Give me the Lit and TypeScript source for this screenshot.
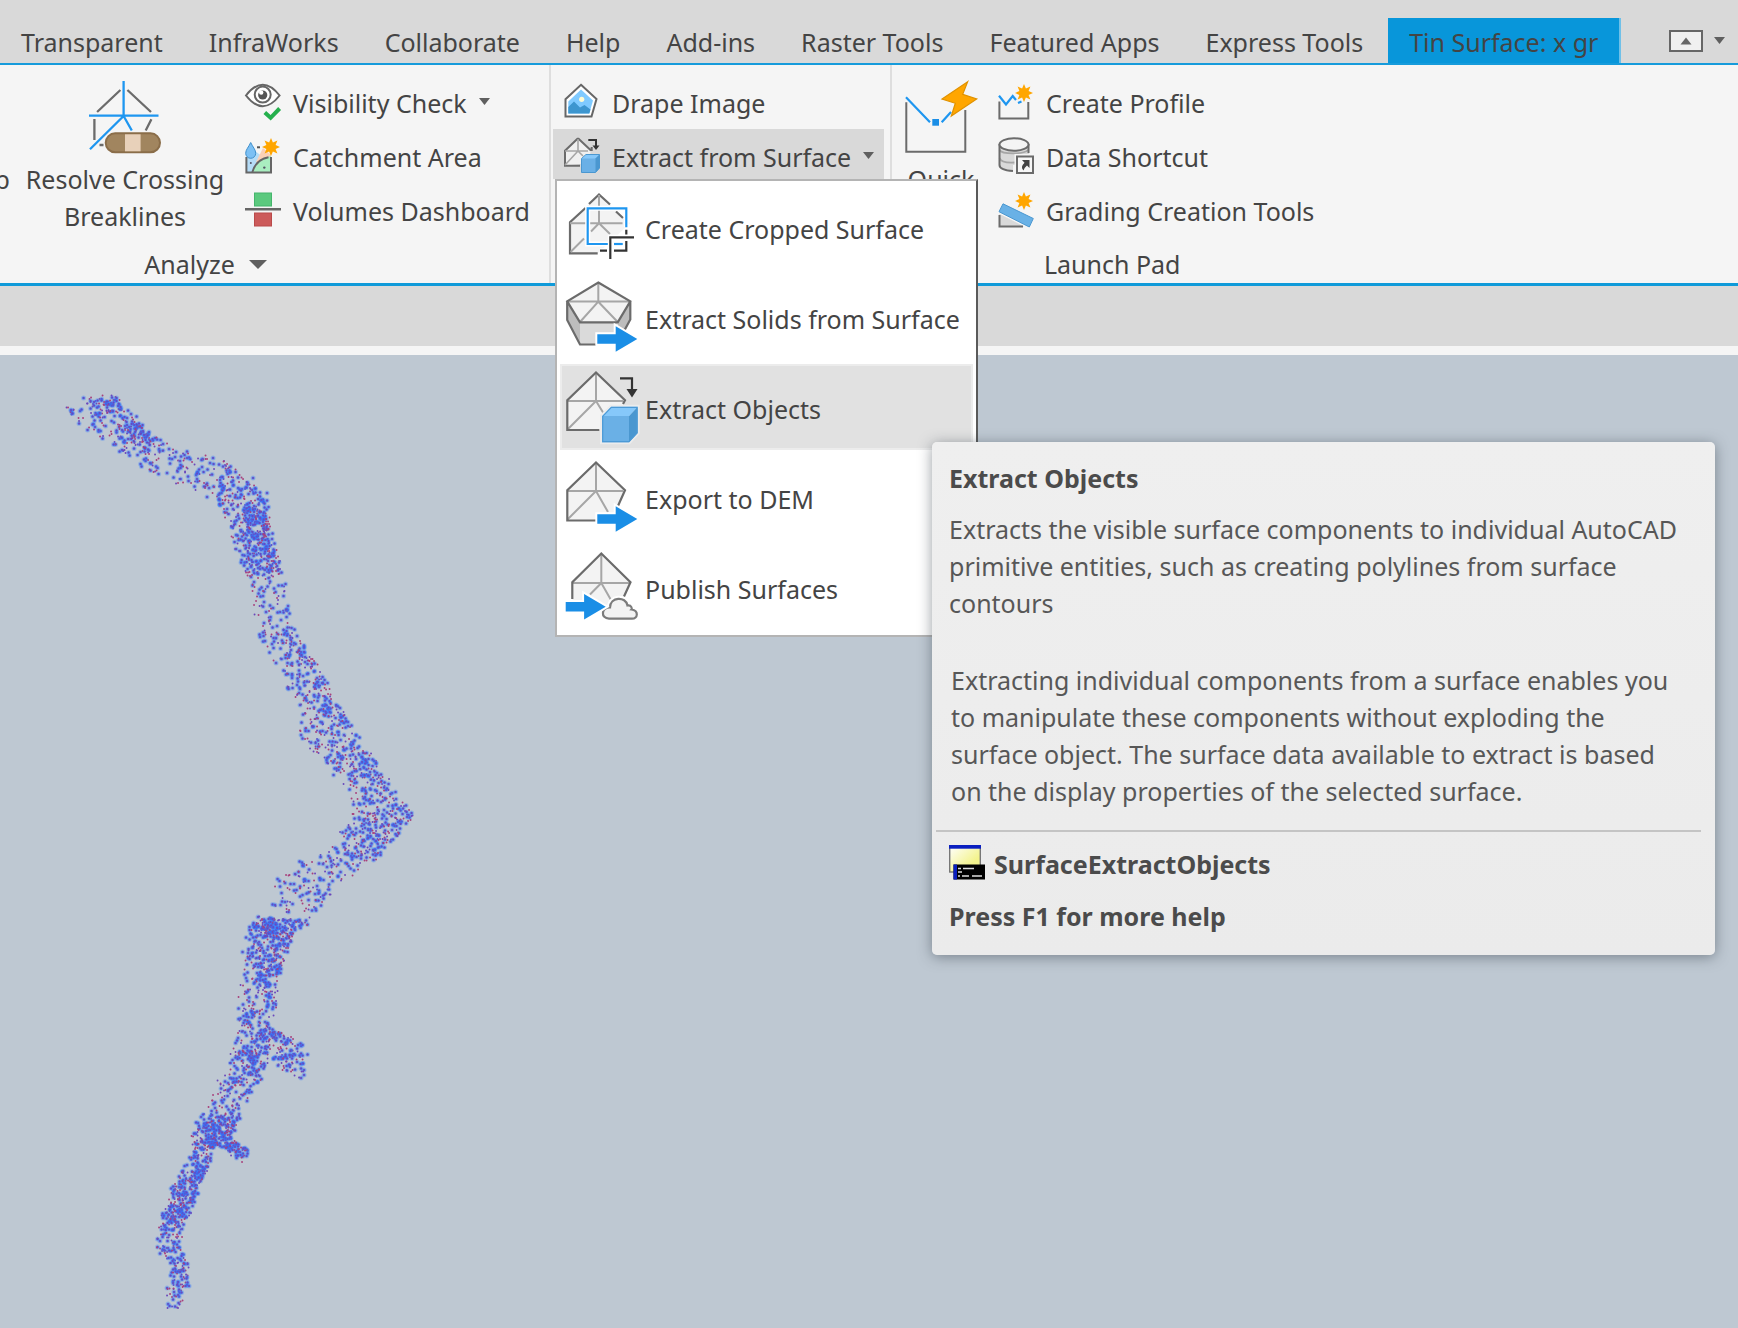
import { LitElement, html, svg, css, nothing, type TemplateResult } from "lit";
import { customElement, property } from "lit/decorators.js";

type Pt = [number, number];

/* ---------- shared icon parts ---------- */

const star = (cx: number, cy: number) => {
  const pts: string[] = [];
  for (let i = 0; i < 16; i++) {
    const r = i % 2 ? 5 : 9;
    const a = (Math.PI * i) / 8;
    pts.push(`${(cx + r * Math.sin(a)).toFixed(1)},${(cy - r * Math.cos(a)).toFixed(1)}`);
  }
  return svg`<polygon points=${pts.join(" ")} fill="#ffa600"/>`;
};

const arrow = (x: number, y: number) => svg`
  <path transform="translate(${x} ${y})" d="M0 8H18.4V0L40 12.7 18.4 25.4V17.4H0Z"
    fill="#1a8ee6" stroke="#fff" stroke-width="4" paint-order="stroke"/>`;

const cube = svg`
  <path d="M36 45 45.3 35.7H71.7V62L63 71.3H36Z" fill="#fff" stroke="#ececec" stroke-width="4"/>
  <path d="M36 45H63V71.3H36Z" fill="#6ab0e6"/>
  <path d="M36 45 45.3 35.7H71.7L63 45Z" fill="#86c8fa"/>
  <path d="M63 45 71.7 35.7V62L63 71.3Z" fill="#4a97d0"/>
  <path d="M36.7 45.3 45.3 36.4H71V62L63 70.6H36.7Z" fill="none" stroke="#4c9ad6" stroke-width="1.2"/>`;

const icons: Record<string, TemplateResult> = {
  resolve: svg`<g fill="none" stroke-width="2.3">
    <path stroke="#6b6b6b" d="M31.4 9 8.1 31M38.400 9 62 31M5.400 38V59M62.400 38.300 56.700 49.500M10.500 64H14.500"/>
    <path stroke="#1e96f0" d="M34.600 0V35M0 34.700H69.500M34.600 35 1 68.300M34.600 35 42.800 49.500"/></g>
    <rect x="16.700" y="52.300" width="54.300" height="19" rx="9.500" fill="#a1855f" stroke="#8a6d49" stroke-width="2"/>
    <rect x="36" y="53.300" width="15.600" height="17" fill="#e8d1ba"/>`,
  visibility: svg`<path d="M1 12.500Q17.700-9 34.600 12.500 17.700 34 1 12.500Z" fill="#fff" stroke="#666" stroke-width="2"/>
    <circle cx="17.700" cy="11.600" r="8" fill="#fff" stroke="#666" stroke-width="2"/>
    <circle cx="17.700" cy="12" r="4.600" fill="#555"/><circle cx="16.200" cy="9.600" r="2.200" fill="#fff"/>
    <path d="m19.800 29.600 5.800 5.200L34.600 25.500" fill="none" stroke="#25b04d" stroke-width="4"/>`,
  catchment: svg`<path d="M1.400 20V35.600H8L18 20 10 14Z" fill="#b5dcf7"/>
    <path d="M11 25 18 11 26 18 25 21 14 25Z" fill="#fbd0b6"/>
    <path d="M8 35.600Q12 21 26 19V35.600Z" fill="#a9eec0"/>
    <path d="M1.400 20V35.400H26V20" fill="none" stroke="#666" stroke-width="2"/>
    <path d="M7.400 35Q11 22.500 23.500 20.300" fill="none" stroke="#666" stroke-width="2"/>
    <path d="M12 10.300H15" stroke="#555" stroke-width="2"/>
    <circle cx="19.300" cy="30.600" r="1.200" fill="#556"/><circle cx="5.800" cy="26" r="1" fill="#556"/>
    <path d="M5.700 5.500C8 10.500 10.700 12.500 10.700 16.300A5 5 0 0 1 .7 16.300C.7 12.500 3.500 10.500 5.700 5.500Z" fill="#7cc0f4" stroke="#3f8fcc" stroke-width="1"/>
    ${star(26, 10)}`,
  volumes: svg`<rect x="9.500" y="2" width="17" height="13" fill="#5bc97e" stroke="#45b56c"/>
    <path d="M0 18.300H36" stroke="#666" stroke-width="2.400"/>
    <rect x="9.500" y="22" width="17" height="13" fill="#cc5a5a" stroke="#b94a4a"/>`,
  drape: svg`<path d="M17 1.800 32.500 16 27.500 33.500H1.500V16.300Z" fill="#fff" stroke="#666" stroke-width="2"/>
    <path d="M17 6.500 29 17.500 25.300 30.500H4.300V18.500Z" fill="#7fcaff"/>
    <path d="M4.300 24 10 18.500 16 24.500 20.500 22 26.500 26.500 25.300 30.500H4.300Z" fill="#3d96cf"/>
    <circle cx="17.700" cy="16.300" r="2.600" fill="#fdfbd5"/>`,
  extractSmall: svg`<path d="M14 1.300 27 13.500 24 26 1 28.700V13.800Z" fill="#f0f0f0"/>
    <path d="M14 1.300 27 13.500M14 1.300 1 13.800V28.700H16M27.700 10V14" fill="none" stroke="#6b6b6b" stroke-width="2"/>
    <path d="M1 14H24M14 2V14M14 14 1 28M14 14 19 19" fill="none" stroke="#a6a6a6" stroke-width="1.600"/>
    <path d="M24.300 3H32V9" fill="none" stroke="#333" stroke-width="2"/><path d="M28.500 8.500H35.500L32 13Z" fill="#333"/>
    <path d="M17.500 21.500 22 17.500H35.500V31L31.500 35.500H17.500Z" fill="#6ab0e6" stroke="#4a97d0"/>
    <path d="M18 21.500 22 18H35L31.500 21.500Z" fill="#86c8fa"/><path d="M31.500 21.500 35.500 17.500V31L31.500 35.500Z" fill="#4a97d0"/>`,
  quick: svg`<path d="M1.300 21.300V70.700H60.300V29" fill="none" stroke="#6b6b6b" stroke-width="2"/>
    <path d="M1 16.300 25 41.300M36.700 41.300 46 31" fill="none" stroke="#1e96f0" stroke-width="2.200"/>
    <rect x="27.300" y="38" width="6.700" height="6.700" fill="#1a8ee6"/>
    <path d="M62.700.700 37 18 50.300 22.300 46.300 35 71.700 18 57.700 13.300Z" fill="#ffa600" stroke="#e09200" stroke-width="1.200"/>`,
  profile: svg`<path d="M1.400 18.500V35.400H30.300V19" fill="none" stroke="#6b6b6b" stroke-width="2"/>
    <path d="M1 12.700 8 21.500 14.700 13 18 17M20 20 23.500 18.500" fill="none" stroke="#1e96f0" stroke-width="2.200"/>${star(26, 10)}`,
  shortcut: svg`<path d="M1.500 7V28C1.500 32 7 34 15 34V28H31V7Z" fill="#d9d9d9"/>
    <path d="M1.500 13C4 17.500 26 17.500 30 13M1.500 21C3 25 10 26 17 25.500" fill="none" stroke="#a6a6a6" stroke-width="1.800"/>
    <path d="M30.500 16V7M1.500 7V28C1.500 31.500 7 33.500 15 34" fill="none" stroke="#6b6b6b" stroke-width="2"/>
    <ellipse cx="16" cy="7.500" rx="14.500" ry="6.300" fill="#f4f4f4" stroke="#6b6b6b" stroke-width="2"/>
    <rect x="19" y="19.500" width="16" height="16.500" fill="#f7f7f7" stroke="#f5f5f5" stroke-width="5"/>
    <rect x="19" y="19.500" width="16" height="16.500" fill="#f7f7f7" stroke="#6b6b6b" stroke-width="2"/>
    <path d="M24 23H31.500V31L29 28.500Q26.500 30.500 25.500 33.500 22 30 26.500 25.700Z" fill="#444"/>`,
  grading: svg`<path d="M1.500 23V35.400H26Z" fill="#d9d9d9"/><path d="M1.500 24V35.400H25" fill="none" stroke="#6b6b6b" stroke-width="2"/>
    <path d="M5 12.800 35.300 27.500 31.300 36 1 20.700Z" fill="#69b1e6" stroke="#4a97d0"/>${star(26, 10)}`,
  cropped: svg`<path d="M33 3.500 64 32.300 31.700 62.300H4V31.300Z" fill="#f3f3f3"/>
    <path d="M23 13 33 3.500 44 13.500M19.500 17 4 31.300V62.300H31.700M50 20.500 57 27" fill="none" stroke="#6b6b6b" stroke-width="2.200"/>
    <path d="M33 4V32.300M4 32.300H56.500M33 32.300 25 40.500M18 47.500 4.500 61M33 32.300 44 43" fill="none" stroke="#a6a6a6" stroke-width="2"/>
    <path d="M60.300 36.300V17.300H21.700V53H46M48 53H56.500" fill="none" stroke="#fff" stroke-width="5"/>
    <path d="M60.300 36.300V17.300H21.700V53H42M48 53H56.500" fill="none" stroke="#1e96f0" stroke-width="2.200"/>
    <path d="M44.300 68V46.300H68M60.300 38.700V43M60.300 49.500V59.700H48M42 59.700H34" fill="none" stroke="#fff" stroke-width="5"/>
    <path d="M48 53H56.500" stroke="#1e96f0" stroke-width="2.200"/>
    <path d="M44.300 68V46.300H68M60.300 38.700V43.500M60.300 50V59.700H48M41 59.700H34" fill="none" stroke="#333" stroke-width="2.200"/>`,
  solids: svg`<path d="M1 20.300 14 41.300V63.500L1 39ZM64.500 20.300 51.700 41.300V63.500L64.500 39Z" fill="#bdbdbd"/>
    <path d="M14 41.300H51.700V63.500H14Z" fill="#dadada"/>
    <path d="M32.300 1.500 64.300 20.300 51.700 41.300H14L1.200 20.300Z" fill="#f3f3f3"/>
    <path d="M32.300 2V20.700M2 20.500H64M32.300 20.700 14 41M32.300 20.700 51.700 41" fill="none" stroke="#a6a6a6" stroke-width="2"/>
    <path d="M32.300 1.500 64.300 20.300 51.700 41.300H14L1.200 20.300ZM1.200 20.300V39L14 63.500H30M64.300 20.300V38.500L57 52" fill="none" stroke="#6b6b6b" stroke-width="2.200"/>
    ${arrow(31.300, 45.300)}`,
  objects: svg`<path d="M30 1.500 59 29.300 46 59H1.300V29.300Z" fill="#f3f3f3"/>
    <path d="M1.300 30H57M30 2V30M30 30 1.500 58.500M30 30 38 43" fill="none" stroke="#a6a6a6" stroke-width="2"/>
    <path d="M33.300 59H1.300V29.300L30 1.500 59 29.300 57 33" fill="none" stroke="#6b6b6b" stroke-width="2.200"/>
    <path d="M54 7.300H66V19" fill="none" stroke="#333" stroke-width="2.200"/><path d="M60.500 18H71.500L66 26.500Z" fill="#333"/>${cube}`,
  dem: svg`<path d="M30 1.500 59 29.300 46 59H1.300V29.300Z" fill="#f3f3f3"/>
    <path d="M1.300 30H57M30 2V30M30 30 1.500 58.500M30 30 42 51" fill="none" stroke="#a6a6a6" stroke-width="2"/>
    <path d="M30 59.500H1.300V29.300L30 1.500 59 29.300 51.500 46" fill="none" stroke="#6b6b6b" stroke-width="2.200"/>
    ${arrow(31.300, 45.300)}`,
  publish: svg`<path d="M35.300 2.500 64.500 31.300 54 54H6.300V31.300Z" fill="#f3f3f3"/>
    <path d="M6.300 32H63M35.300 3V32M35.300 32 24 43.500M35.300 32 45 49" fill="none" stroke="#a6a6a6" stroke-width="2"/>
    <path d="M6.300 48V31.300L35.300 2.500 64.500 31.300 58 45.500" fill="none" stroke="#6b6b6b" stroke-width="2.200"/>
    <path d="M43 67.700C34.500 67.500 35 56.500 44 56.500 44 45.500 60 45 61.500 54.500 66 54 66 58 65.500 58.500 73 59.500 72 67.700 66 67.700Z"
      fill="#f3f3f3" stroke="#fff" stroke-width="6" paint-order="stroke"/>
    <path d="M43 67.700C34.500 67.500 35 56.500 44 56.500 44 45.500 60 45 61.500 54.500 66 54 66 58 65.500 58.500 73 59.500 72 67.700 66 67.700Z"
      fill="#f3f3f3" stroke="#7c7c7c" stroke-width="2.200"/>
    ${arrow(-0.300, 43)}`,
  command: svg`<defs><linearGradient id="note" x1="0" y1="0" x2="1" y2="1"><stop offset="0" stop-color="#fff"/><stop offset=".7" stop-color="#f3f38c"/></linearGradient></defs>
    <rect x=".700" y="1" width="30.600" height="26" fill="url(#note)" stroke="#777" stroke-width="1.400"/>
    <rect y="0" width="32" height="3.700" fill="#0a1fc0"/>
    <rect x="4.500" y="19.500" width="31.500" height="15" fill="#000"/><rect x="4.500" y="19.500" width="3.500" height="15" fill="#0a1fc0"/>
    <path d="M9 23.500H12M14 23.500H25M9 27H13M9 31H11M13 31H20M23 31H33" stroke="#ddd" stroke-width="1.600"/>`,
};

@customElement("cad-icon")
class CadIcon extends LitElement {
  @property() name = "";
  @property({ type: Number }) size = 36;
  static styles = css`
    :host { display: block; flex: none; }
    svg { display: block; overflow: visible; }
  `;
  render() {
    return html`<svg width=${this.size} height=${this.size} viewBox="0 0 ${this.size} ${this.size}" aria-hidden="true">${icons[this.name]}</svg>`;
  }
}

/* ---------- survey point cloud ---------- */

/** One strip of the corridor: four corners and the area in px² that each point takes. */
type Strip = [Pt, Pt, Pt, Pt, number];

/** Cross-sections down the corridor: left edge, right edge, px² per point up to the next one. */
const sections: [Pt, Pt, number][] = [
  [[65, 417], [67, 408], 30], [[90, 434], [88, 394], 17], [[118, 449], [117, 398], 13],
  [[150, 474], [147, 430], 26], [[183, 487], [177, 450], 22], [[217, 503], [222, 458], 12],
  [[227, 523], [265, 490], 8], [[232, 543], [270, 530], 7], [[248, 578], [282, 573], 26],
  [[250, 603], [287, 593], 28], [[254, 632], [292, 625], 14], [[283, 675], [320, 670], 13],
  [[295, 703], [337, 703], 14], [[303, 740], [360, 740], 11], [[323, 760], [378, 765], 13],
  [[350, 792], [396, 790], 13], [[353, 813], [413, 818], 12], [[330, 847], [388, 847], 12],
  [[313, 860], [383, 855], 20], [[285, 863], [347, 880], 24], [[270, 885], [318, 908], 30], [[270, 912], [314, 912], 30],
];

const lowerSections: [Pt, Pt, number][] = [
  [[253, 917], [312, 918], 7], [[247, 937], [290, 940], 8], [[240, 978], [280, 973], 12],
  [[238, 1025], [273, 1025], 11], [[230, 1053], [268, 1063], 12], [[210, 1098], [257, 1087], 17],
  [[200, 1116], [240, 1116], 5], [[192, 1131], [237, 1129], 6], [[194, 1148], [213, 1148], 7],
  [[180, 1170], [207, 1170], 6], [[170, 1190], [198, 1190], 5], [[165, 1210], [191, 1210], 6],
  [[155, 1227], [184, 1227], 10], [[158, 1250], [180, 1250], 9], [[169, 1267], [188, 1265], 8],
  [[170, 1280], [190, 1280], 10], [[164, 1297], [185, 1290], 13], [[165, 1310], [180, 1307], 14],
];

const spurs: Strip[] = [
  [[101, 395], [117, 396], [126, 412], [105, 414], 10],
  [[120, 416], [142, 426], [168, 447], [122, 445], 13],
  [[250, 510], [266, 500], [268, 540], [252, 540], 14],
  [[262, 1030], [285, 1032], [312, 1052], [263, 1063], 12],
  [[273, 1058], [312, 1050], [302, 1081], [278, 1066], 12],
  [[248, 1048], [256, 1048], [254, 1072], [246, 1072], 8],
  [[253, 917], [276, 917], [276, 937], [250, 937], 9],
  [[205, 1131], [230, 1131], [240, 1150], [215, 1146], 6],
  [[225, 1138], [250, 1148], [242, 1163], [225, 1154], 7],
];

const strips = (rows: [Pt, Pt, number][]): Strip[] =>
  rows.slice(1).map(([l, r], i) => [rows[i][0], rows[i][1], r, l, rows[i][2]] as Strip);

function scatter(): Pt[] {
  let seed = 20117;
  const rnd = () => ((seed = (seed * 1664525 + 1013904223) >>> 0) / 4294967296);
  const out: Pt[] = [];
  for (const [a, b, c, d, per] of [...strips(sections), ...strips(lowerSections), ...spurs]) {
    const q = [a, b, c, d];
    const area = Math.abs(q.reduce((s, p, i) => s + p[0] * q[(i + 1) % 4][1] - q[(i + 1) % 4][0] * p[1], 0)) / 2;
    for (let n = Math.round(area / per); n > 0; n--) {
      const u = Math.pow(rnd(), 0.8);
      const v = rnd();
      out.push([0, 1].map((k) =>
        Math.round(((a[k] * (1 - u) + b[k] * u) * (1 - v) + (d[k] * (1 - u) + c[k] * u) * v + (rnd() - 0.5) * 4) * 2) / 2) as Pt);
    }
  }
  return out;
}

@customElement("point-cloud")
class PointCloud extends LitElement {
  static styles = css`
    :host { display: block; }
    svg { display: block; overflow: visible; }
    path { fill: none; stroke-linecap: round; }
    .halo { stroke: #2f7bff; stroke-width: 5; opacity: 0.28; }
    .core { stroke: #3f6cf2; stroke-width: 3; opacity: 0.7; }
    .dot { stroke: #6a48bc; stroke-width: 1.8; }
    .mark { stroke: #a8407c; stroke-width: 1.8; }
  `;
  render() {
    const pts = scatter();
    const d = (x: number, y: number) => `M${x} ${y - 355}h.1`;
    return html`<svg width="440" height="970" viewBox="0 0 440 970" role="img" aria-label="Surface points">
      ${pts.map(([x, y], i) => (i * 7) % 10 < 5
        ? svg`<path class="halo" d=${d(x, y)}/><path class="core" d=${d(x, y)}/><path class="dot" d=${d(x, y)}/>`
        : svg`<path class=${i % 2 ? "mark" : "dot"} d=${d(x, y)}/>`)}
    </svg>`;
  }
}

/* ---------- page ---------- */

const tabs = ["Transparent", "InfraWorks", "Collaborate", "Help", "Add-ins", "Raster Tools", "Featured Apps", "Express Tools", "Tin Surface: x gr"];
const menu: [string, string][] = [
  ["cropped", "Create Cropped Surface"], ["solids", "Extract Solids from Surface"], ["objects", "Extract Objects"],
  ["dem", "Export to DEM"], ["publish", "Publish Surfaces"],
];

@customElement("app-root")
class AppRoot extends LitElement {
  static styles = css`
    :host {
      display: flex; flex-direction: column; min-height: 100vh; position: relative; overflow: hidden;
      background: #bec8d2; color: #444; font: 25px/36px "Noto Sans", "Open Sans", sans-serif;
    }
    * { box-sizing: border-box; }
    button { border: 0; padding: 0; margin: 0; background: none; color: inherit; font: inherit; white-space: nowrap; text-align: left; }
    .tabbar { display: flex; align-items: flex-end; padding-top: 18px; background: #d9d9d9; border-bottom: 2px solid #169bdb; }
    .tabs { display: flex; gap: 4px; }
    .tab { height: 45px; padding: 2px 21px 0; }
    .tab.active { background: #0896da; border-right: 2px solid #6fc0e8; }
    .collapse { display: flex; align-items: center; gap: 11px; margin-left: 48px; height: 45px; }
    .ribbon { display: flex; background: #f5f5f5; border-bottom: 3px solid #0f9ad9; }
    .panel { display: flex; flex-direction: column; flex: none; padding-top: 10px; border-right: 2px solid #dedede; }
    .panel.launch { border-right: 0; }
    .groups { display: flex; min-height: 160px; }
    .cut { display: flex; justify-content: flex-end; align-items: flex-start; width: 10px; padding-top: 86px; line-height: 37px; overflow: hidden; }
    .big { display: flex; flex-direction: column; align-items: center; gap: 8px; padding-top: 6px; text-align: center; white-space: pre-line; line-height: 37px; }
    .resolve { width: 230px; }
    .quick { width: 98px; }
    .list { display: flex; flex-direction: column; gap: 4px; padding-left: 5px; }
    .row { display: flex; align-items: center; gap: 12px; height: 50px; padding-top: 2px; }
    .label { padding-top: 3px; }
    .caption { display: flex; align-items: center; justify-content: center; gap: 14px; height: 48px; padding-top: 10px; }
    .analyze { width: 551px; }
    .analyze .caption { padding-right: 138px; }
    .surface { width: 341px; }
    .surface .list { padding-left: 2px; }
    .surface .row { width: 331px; padding-left: 11px; }
    .launch { padding-right: 18px; }
    .launch .list { padding-left: 8px; }
    .launch .caption { padding-left: 18px; }
    .drop { position: relative; }
    .drop > .row { background: #d9d9d9; }
    .menu {
      position: absolute; z-index: 2; top: 50px; left: 2px; display: flex; flex-direction: column; gap: 4px; padding: 3px 3px 5px;
      background: #fff; border: 2px solid #b4b4b4; border-right-color: #5a5a5a; width: 423px;
    }
    .item { display: flex; align-items: center; gap: 7px; height: 86px; padding-left: 4px; border: 2px solid transparent; }
    .item.on { background: #e1e1e1; border-color: #ececec; }
    .strip { height: 60px; background: #d9d9d9; }
    .rule { height: 9px; background: #f5f5f5; }
    .tip {
      position: absolute; z-index: 3; top: 442px; left: 932px; width: 783px; padding: 18px 14px 20px 4px; border-radius: 5px;
      background: linear-gradient(#efefef, #ebebeb); box-shadow: 0 2px 14px rgba(50, 60, 70, 0.5); color: #575757; line-height: 37px;
    }
    .tip h2, .tip p { margin: 0; padding: 0 12px 0 13px; font: inherit; }
    .tip h2, .tip .strong { color: #4b4b4b; font-weight: 700; }
    .tip h2 + p { margin-top: 14px; }
    .tip p.more { margin-top: 40px; padding-left: 15px; }
    .tip hr { height: 2px; margin: 20px 0 11px; border: 0; background: #c4c4c4; }
    .tip .command { display: flex; align-items: center; gap: 9px; }
    .tip .help { margin-top: 15px; }
  `;

  private caret(w: number, h: number) {
    return html`<svg width=${w} height=${h} viewBox="0 0 10 10" preserveAspectRatio="none" aria-hidden="true"><path d="M0 0H10L5 10Z" fill="#5f5f5f"/></svg>`;
  }

  private row(icon: string, text: string, caret = false) {
    return html`<button class="row"><cad-icon name=${icon}></cad-icon><span class="label">${text}</span>${caret ? this.caret(11, 7) : nothing}</button>`;
  }

  render() {
    return html`
      <header class="tabbar">
        <nav class="tabs" role="tablist">
          ${tabs.map((t, i) => html`<button role="tab" aria-selected=${i === 8} class="tab ${i === 8 ? "active" : ""}">${t}</button>`)}
        </nav>
        <button class="collapse" aria-label="Minimize ribbon">
          <svg width="34" height="22" viewBox="0 0 34 22" aria-hidden="true"><rect x="1" y="1" width="32" height="20" fill="#f0f0f0" stroke="#666" stroke-width="2"/><path d="M11.500 14.500H22.500L17 7.500Z" fill="#666"/></svg>
          ${this.caret(11, 7)}
        </button>
      </header>

      <section class="ribbon">
        <div class="panel analyze">
          <div class="groups">
            <button class="cut">p</button>
            <button class="big resolve"><cad-icon name="resolve" size="72"></cad-icon><span>Resolve Crossing
Breaklines</span></button>
            <div class="list">
              ${this.row("visibility", "Visibility Check", true)} ${this.row("catchment", "Catchment Area")} ${this.row("volumes", "Volumes Dashboard")}
            </div>
          </div>
          <button class="caption"><span>Analyze</span>${this.caret(18, 9)}</button>
        </div>

        <div class="panel surface">
          <div class="list">
            ${this.row("drape", "Drape Image")}
            <div class="drop">
              ${this.row("extractSmall", "Extract from Surface", true)}
              <div class="menu" role="menu">
                ${menu.map(([icon, text]) => html`<button role="menuitem" class="item ${icon === "objects" ? "on" : ""}">
                  <cad-icon name=${icon} size="72"></cad-icon><span class="label">${text}</span></button>`)}
              </div>
            </div>
          </div>
        </div>

        <div class="panel launch">
          <div class="groups">
            <button class="big quick"><cad-icon name="quick" size="72"></cad-icon><span>Quick</span></button>
            <div class="list">
              ${this.row("profile", "Create Profile")} ${this.row("shortcut", "Data Shortcut")} ${this.row("grading", "Grading Creation Tools")}
            </div>
          </div>
          <div class="caption">Launch Pad</div>
        </div>
      </section>
      <div class="strip"></div>
      <div class="rule"></div>
      <point-cloud></point-cloud>

      <aside class="tip" role="tooltip">
        <h2>Extract Objects</h2>
        <p>Extracts the visible surface components to individual AutoCAD primitive entities, such as creating polylines from surface contours</p>
        <p class="more">Extracting individual components from a surface enables you to manipulate these components without exploding the surface object. The surface data available to extract is based on the display properties of the selected surface.</p>
        <hr />
        <p class="strong command"><cad-icon name="command"></cad-icon><span class="label">SurfaceExtractObjects</span></p>
        <p class="strong help">Press F1 for more help</p>
      </aside>
    `;
  }
}
